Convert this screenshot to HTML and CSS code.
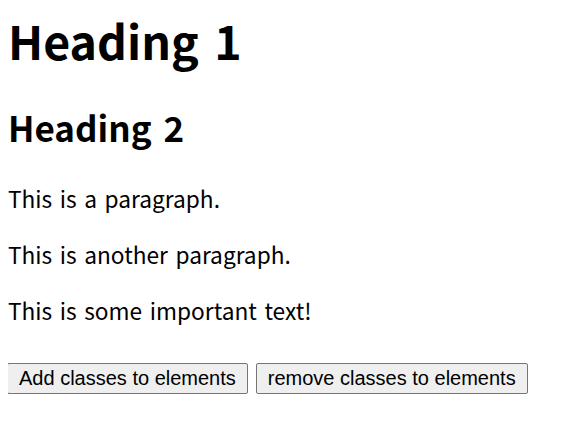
FILE: index.html
```html
<!DOCTYPE html>
<html>
<head>
<meta charset="utf-8">
<link rel="stylesheet" href="styles.css">
</head>
<body class="page">
<h1 class="title">Heading 1</h1>
<h2 class="subtitle">Heading 2</h2>
<p class="text">This is a paragraph.</p>
<p class="text">This is another paragraph.</p>
<p class="text">This is some important text!</p>
<div class="actions">
<button class="btn">Add classes to elements</button>
<button class="btn">remove classes to elements</button>
</div>
</body>
</html>
```
FILE: styles.css
```css
.page {
  margin: 8px;
  font-family: "Noto Sans CJK KR", "Noto Sans", sans-serif;
  color: #000;
  background: #fff;
}
.title {
  margin: 0;
  font-size: 46.5px;
  line-height: 64px;
  font-weight: bold;
  word-spacing: 5px;
}
.subtitle {
  margin: 30.5px 0 0;
  font-size: 35px;
  line-height: 48px;
  font-weight: bold;
  word-spacing: 4px;
}
.text {
  margin: 24px 0 0;
  font-size: 22.7px;
  line-height: 32px;
  word-spacing: 2.5px;
}
.subtitle + .text {
  margin-top: 32px;
}
.actions {
  display: flex;
  gap: 8px;
  margin: 36px 0 0 -1px;
}
.btn {
  font-family: "Liberation Sans", Arial, sans-serif;
  font-size: 20px;
  line-height: 23px;
  padding: 3px 11px;
  border: 1px solid #767676;
  border-radius: 2px;
  background: #efefef;
  color: #000;
}
```
